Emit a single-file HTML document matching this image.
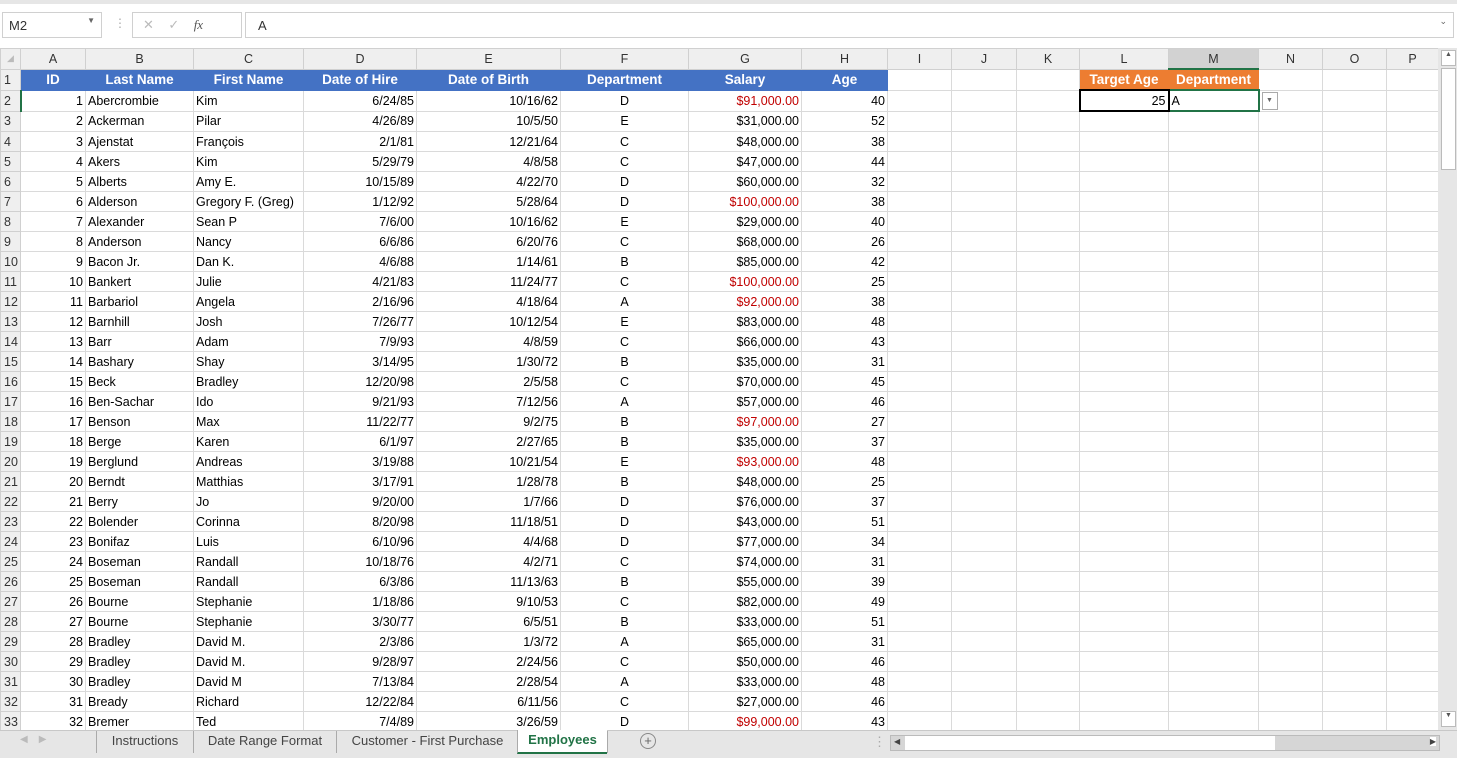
<!DOCTYPE html><html><head><meta charset="utf-8"><style>
body{margin:0;width:1457px;height:757px;overflow:hidden;background:#fff;font-family:"Liberation Sans",Arial,sans-serif;position:relative}
.top{position:absolute;left:0;top:0;width:1457px;height:48px;background:#fff;border-top:4px solid #e6e6e6;box-sizing:border-box}
.box{position:absolute;border:1px solid #d0d0d0;background:#fff;font-size:13px;color:#333;box-sizing:border-box}
table{position:absolute;left:0;top:48px;border-collapse:collapse;table-layout:fixed;font-size:12.5px}
td{height:19px;padding:0 2px;border:1px solid #dadada;white-space:nowrap;overflow:hidden;color:#000}
tr.ch td{background:#efefef;color:#333;text-align:center;border-color:#d0d0d0;height:19px}
td.rh{background:#efefef;color:#333;text-align:left;padding-left:3px;border-color:#d0d0d0}
td.r{text-align:right}td.c{text-align:center}
tr.h1 td.b{background:#4472c4;color:#fff;font-weight:bold;text-align:center;font-size:13.5px;border-color:#4472c4}
td.o{background:#ed7d31;color:#fff;font-weight:bold;text-align:center;font-size:13.5px;border-color:#ed7d31}
.red{color:#c00000}
.tabs{position:absolute;left:0;top:730px;width:1457px;height:27px;background:#e6e6e6;border-top:1px solid #c8c8c8;font-size:13px;color:#444}
.tab{position:absolute;top:0;height:22px;line-height:20px;border-left:1px solid #aaa}
</style></head><body>
<div class="top">
<div class="box" style="left:2px;top:8px;width:100px;height:26px;padding:5px 6px">M2<span style="position:absolute;right:6px;top:3px;font-size:8px;color:#666">▼</span></div>
<div style="position:absolute;left:114px;top:12px;color:#aaa;font-size:12px">⋮</div>
<div class="box" style="left:132px;top:8px;width:110px;height:26px;color:#bbb;padding:4px 10px">✕ &nbsp;&nbsp; ✓ &nbsp;&nbsp; <i style="color:#555;font-family:'Liberation Serif'">fx</i></div>
<div class="box" style="left:245px;top:8px;width:1209px;height:26px;padding:5px 12px">A<span style="position:absolute;right:6px;top:3px;font-size:9px;color:#666">⌄</span></div>
</div>
<table>
<colgroup><col style="width:20px"><col style="width:65px"><col style="width:108px"><col style="width:110px"><col style="width:113px"><col style="width:144px"><col style="width:128px"><col style="width:113px"><col style="width:86px"><col style="width:64px"><col style="width:65px"><col style="width:63px"><col style="width:89px"><col style="width:90px"><col style="width:64px"><col style="width:64px"><col style="width:52px"></colgroup>
<tr class="ch"><td style="color:#bbb;font-size:9px">◢</td><td>A</td><td>B</td><td>C</td><td>D</td><td>E</td><td>F</td><td>G</td><td>H</td><td>I</td><td>J</td><td>K</td><td>L</td><td style="background:#d2d2d2;border-bottom:2px solid #217346">M</td><td>N</td><td>O</td><td>P</td></tr>
<tr class="h1"><td class="rh">1</td><td class="b">ID</td><td class="b">Last Name</td><td class="b">First Name</td><td class="b">Date of Hire</td><td class="b">Date of Birth</td><td class="b">Department</td><td class="b">Salary</td><td class="b">Age</td><td></td><td></td><td></td><td class="o">Target Age</td><td class="o">Department</td><td></td><td></td><td></td></tr>
<tbody id="tb"></tbody>
</table>
<div style="position:absolute;left:1438px;top:48px;width:19px;height:682px;background:#e6e6e6"><div style="position:absolute;left:3px;top:2px;width:13px;height:14px;background:#fff;border:1px solid #bbb;font-size:7px;text-align:center;color:#555">▲</div><div style="position:absolute;left:3px;top:20px;width:13px;height:100px;background:#fff;border:1px solid #bbb"></div><div style="position:absolute;left:3px;top:663px;width:13px;height:14px;background:#fff;border:1px solid #bbb;font-size:7px;text-align:center;color:#555">▼</div></div>
<div class="tabs">
<span style="position:absolute;left:20px;top:3px;color:#bbb;font-size:10px">◀ &nbsp;&nbsp; ▶</span>
<div class="tab" style="left:96px;width:96px;text-align:center">Instructions</div>
<div class="tab" style="left:193px;width:142px;text-align:center">Date Range Format</div>
<div class="tab" style="left:336px;width:181px;text-align:center">Customer - First Purchase</div>
<div class="tab" style="left:517px;width:89px;text-align:center;background:#fff;color:#217346;font-weight:bold;border-bottom:2px solid #217346;top:-1px">Employees</div>
<div class="tab" style="left:607px;width:0"></div>
<div style="position:absolute;left:640px;top:2px;width:14px;height:14px;border:1px solid #888;border-radius:50%;text-align:center;line-height:14px;color:#666">+</div>
<span style="position:absolute;left:873px;top:3px;color:#aaa">⋮</span>
<div style="position:absolute;left:890px;top:4px;width:548px;height:14px;background:#d6d6d6;border:1px solid #bbb"><div style="position:absolute;left:14px;top:0;width:370px;height:14px;background:#fff"></div><span style="position:absolute;left:3px;font-size:8px;top:1px">◀</span><span style="position:absolute;right:3px;font-size:8px;top:1px;background:#fff">▶</span></div>
</div>
<script>
const d=`Abercrombie|Kim|6/24/85|10/16/62|D|91|40
Ackerman|Pilar|4/26/89|10/5/50|E|31|52
Ajenstat|François|2/1/81|12/21/64|C|48|38
Akers|Kim|5/29/79|4/8/58|C|47|44
Alberts|Amy E.|10/15/89|4/22/70|D|60|32
Alderson|Gregory F. (Greg)|1/12/92|5/28/64|D|100|38
Alexander|Sean P|7/6/00|10/16/62|E|29|40
Anderson|Nancy|6/6/86|6/20/76|C|68|26
Bacon Jr.|Dan K.|4/6/88|1/14/61|B|85|42
Bankert|Julie|4/21/83|11/24/77|C|100|25
Barbariol|Angela|2/16/96|4/18/64|A|92|38
Barnhill|Josh|7/26/77|10/12/54|E|83|48
Barr|Adam|7/9/93|4/8/59|C|66|43
Bashary|Shay|3/14/95|1/30/72|B|35|31
Beck|Bradley|12/20/98|2/5/58|C|70|45
Ben-Sachar|Ido|9/21/93|7/12/56|A|57|46
Benson|Max|11/22/77|9/2/75|B|97|27
Berge|Karen|6/1/97|2/27/65|B|35|37
Berglund|Andreas|3/19/88|10/21/54|E|93|48
Berndt|Matthias|3/17/91|1/28/78|B|48|25
Berry|Jo|9/20/00|1/7/66|D|76|37
Bolender|Corinna|8/20/98|11/18/51|D|43|51
Bonifaz|Luis|6/10/96|4/4/68|D|77|34
Boseman|Randall|10/18/76|4/2/71|C|74|31
Boseman|Randall|6/3/86|11/13/63|B|55|39
Bourne|Stephanie|1/18/86|9/10/53|C|82|49
Bourne|Stephanie|3/30/77|6/5/51|B|33|51
Bradley|David M.|2/3/86|1/3/72|A|65|31
Bradley|David M.|9/28/97|2/24/56|C|50|46
Bradley|David M|7/13/84|2/28/54|A|33|48
Bready|Richard|12/22/84|6/11/56|C|27|46
Bremer|Ted|7/4/89|3/26/59|D|99|43`.split('\n');
let h='';d.forEach((l,i)=>{const f=l.split('|');const s=+f[5];
let extra='<td></td><td></td><td></td><td></td><td></td><td></td><td></td><td></td>';
if(i==0)extra='<td></td><td></td><td></td><td class="r" style="border:2px solid #000">25</td><td style="border:2px solid #217346;position:relative;overflow:visible">A</td><td style="position:relative;overflow:visible"><div style="position:absolute;left:2px;top:1px;width:14px;height:16px;border:1px solid #aaa;background:#fff;font-size:7px;text-align:center;line-height:16px;color:#666">▼</div></td><td></td><td></td>';
h+=`<tr><td class="rh"${i==0?' style="border-right:2px solid #217346"':''}>${i+2}</td><td class="r">${i+1}</td><td>${f[0]}</td><td>${f[1]}</td><td class="r">${f[2]}</td><td class="r">${f[3]}</td><td class="c">${f[4]}</td><td class="r ${s>=90?'red':''}">$${s==100?'100':s},000.00</td><td class="r">${f[6]}</td>${extra}</tr>`;});
document.getElementById('tb').innerHTML=h;
</script>
</body></html>
